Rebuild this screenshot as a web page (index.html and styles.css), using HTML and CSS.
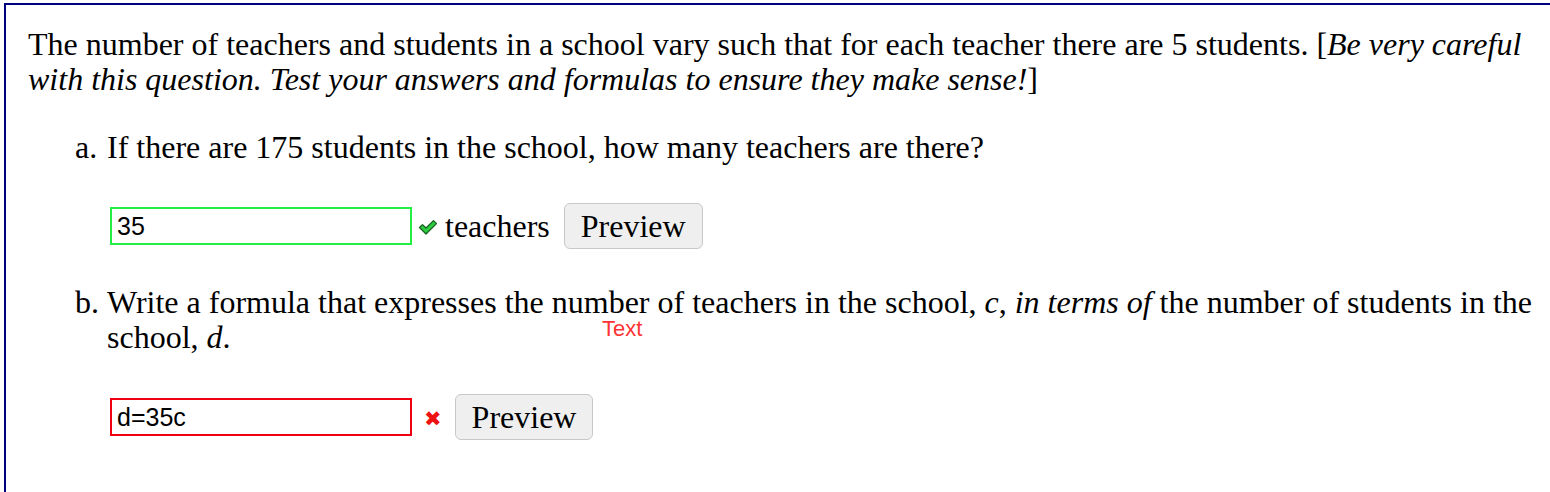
FILE: index.html
```html
<!DOCTYPE html>
<html>
<head>
<meta charset="utf-8">
<link rel="stylesheet" href="styles.css">
</head>
<body>
<div class="problem">
  <p class="intro">The number of teachers and students in a school vary such that for each teacher there are 5 students. [<i>Be very careful with this question. Test your answers and formulas to ensure they make sense!</i>]</p>
  <div class="item">
    <span class="marker">a.</span>
    <div class="body">
      <p class="q">If there are 175 students in the school, how many teachers are there?</p>
      <div class="answer-row">
        <input class="ans correct" type="text" value="35">
        <svg class="mark" width="20" height="16" viewBox="0 0 20 16"><path d="M1.5 8.5 L4.5 5.6 L8 9 L15.5 1.6 L18.5 4.6 L8 15 Z" fill="#2ecc40" stroke="#17601f" stroke-width="1.3" stroke-linejoin="round"/></svg>
        <span class="unit">teachers</span>
        <button class="preview">Preview</button>
      </div>
    </div>
  </div>
  <div class="item">
    <span class="marker">b.</span>
    <div class="body">
      <p class="q">Write a formula that expresses the number of teachers in the school, <i>c</i>, <i>in terms of</i> the number of students in the school, <i>d</i>.</p>
      <span class="tip">Text</span>
      <div class="answer-row">
        <input class="ans incorrect" type="text" value="d=35c">
        <span class="xmark">✖</span>
        <button class="preview">Preview</button>
      </div>
    </div>
  </div>
</div>
</body>
</html>
```
FILE: styles.css
```css
html, body {
  margin: 0;
  padding: 0;
  overflow: hidden;
  background: #fff;
}
.problem {
  position: relative;
  margin: 3px 0 0 4px;
  width: 1560px;
  height: 540px;
  border: 2px solid #000080;
  box-sizing: border-box;
  padding: 22px 0 0 22px;
  font-family: "Liberation Serif", "Times New Roman", serif;
  font-size: 32px;
  line-height: 35px;
  color: #000;
}
.intro {
  margin: 0;
  width: 1500px;
}
.item {
  display: flex;
  margin-top: 33px;
  padding-left: 47px;
}
.marker {
  width: 32px;
  flex: none;
}
.body {
  flex: 1;
  position: relative;
  max-width: 1435px;
}
.q {
  margin: 0;
}
.answer-row {
  display: flex;
  align-items: center;
  margin-top: 38px;
  padding-left: 3px;
}
.item + .item {
  margin-top: 36px;
}
.item + .item .answer-row {
  margin-top: 39px;
}
.ans {
  width: 302px;
  height: 38px;
  box-sizing: border-box;
  border: 2px solid;
  padding: 0 5px;
  font-family: "Liberation Sans", Arial, sans-serif;
  font-size: 25px;
  color: #000;
  outline: none;
  margin: 0;
}
.correct { border-color: #22ee44; }
.incorrect { border-color: #ee0011; }
.mark {
  margin: 2px 7px 0 6px;
}
.xmark {
  color: #ee1111;
  font-size: 21px;
  line-height: 1;
  margin: 4px 13px 0 12px;
  font-family: "DejaVu Sans", sans-serif;
}
.unit {
  margin-right: 14px;
}
.preview {
  height: 46px;
  padding: 0 16px;
  font-family: "Liberation Serif", "Times New Roman", serif;
  font-size: 32px;
  background: #efefef;
  border: 1px solid #c8c8c8;
  border-radius: 6px;
  color: #000;
}
.tip {
  position: absolute;
  left: 495px;
  top: 31px;
  font-family: "Liberation Sans", Arial, sans-serif;
  font-size: 22px;
  line-height: normal;
  color: #ff3333;
}
```
